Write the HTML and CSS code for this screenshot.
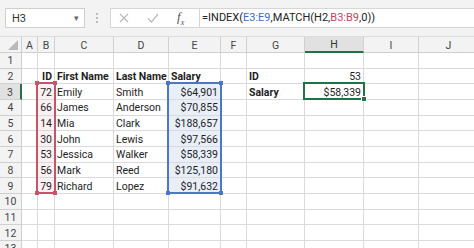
FILE: index.html
```html
<!DOCTYPE html>
<html lang="en">
  <head>
    <meta charset="UTF-8">
    <title>INDEX and MATCH</title>
    <link rel="stylesheet" href="styles.css">
  </head>
  <body>

    <!-- Name box + formula bar -->
    <div class="toolbar">
      <div class="name-box">
        <span>H3</span>
        <span class="drop">&#9662;</span>
      </div>
      <div class="grip"><i></i><i></i><i></i></div>
      <div class="formula-bar">
        <div class="fx-buttons">
          <svg width="10" height="10" viewBox="0 0 10 10"><path d="M1 1 L9 9 M9 1 L1 9" stroke="#b9b9b9" stroke-width="1.2"/></svg>
          <svg width="12" height="10" viewBox="0 0 12 10"><path d="M1 5.5 L4.5 9 L11 1" stroke="#b9b9b9" stroke-width="1.2" fill="none"/></svg>
          <span class="fx">f<sub>x</sub></span>
        </div>
        <div class="formula">=INDEX(<span class="ref-blue">E3:E9</span>,MATCH(H2,<span class="ref-red">B3:B9</span>,0))</div>
      </div>
    </div>

    <div class="sheet">
      <div class="row head">
        <div class="corner"><span></span></div>
        <div>A</div><div>B</div><div>C</div><div>D</div><div>E</div><div>F</div><div>G</div><div class="active">H</div><div>I</div><div>J</div>
      </div>
      <div class="row">
        <div class="rh">1</div>
        <div></div><div></div><div></div><div></div><div></div><div></div><div></div><div></div><div></div><div></div>
      </div>
      <div class="row">
        <div class="rh">2</div>
        <div></div><div class="b r">ID</div><div class="b">First Name</div><div class="b">Last Name</div><div class="b">Salary</div><div></div><div class="b">ID</div><div class="r">53</div><div></div><div></div>
      </div>
      <div class="row">
        <div class="rh active">3</div>
        <div></div><div class="r pink">72</div><div>Emily</div><div>Smith</div><div class="r blue">$64,901</div><div></div><div class="b">Salary</div><div class="r">$58,339</div><div></div><div></div>
      </div>
      <div class="row">
        <div class="rh">4</div>
        <div></div><div class="r pink">66</div><div>James</div><div>Anderson</div><div class="r blue">$70,855</div><div></div><div></div><div></div><div></div><div></div>
      </div>
      <div class="row">
        <div class="rh">5</div>
        <div></div><div class="r pink">14</div><div>Mia</div><div>Clark</div><div class="r blue">$188,657</div><div></div><div></div><div></div><div></div><div></div>
      </div>
      <div class="row">
        <div class="rh">6</div>
        <div></div><div class="r pink">30</div><div>John</div><div>Lewis</div><div class="r blue">$97,566</div><div></div><div></div><div></div><div></div><div></div>
      </div>
      <div class="row">
        <div class="rh">7</div>
        <div></div><div class="r pink">53</div><div>Jessica</div><div>Walker</div><div class="r blue">$58,339</div><div></div><div></div><div></div><div></div><div></div>
      </div>
      <div class="row">
        <div class="rh">8</div>
        <div></div><div class="r pink">56</div><div>Mark</div><div>Reed</div><div class="r blue">$125,180</div><div></div><div></div><div></div><div></div><div></div>
      </div>
      <div class="row">
        <div class="rh">9</div>
        <div></div><div class="r pink">79</div><div>Richard</div><div>Lopez</div><div class="r blue">$91,632</div><div></div><div></div><div></div><div></div><div></div>
      </div>
      <div class="row">
        <div class="rh">10</div>
        <div></div><div></div><div></div><div></div><div></div><div></div><div></div><div></div><div></div><div></div>
      </div>
      <div class="row">
        <div class="rh">11</div>
        <div></div><div></div><div></div><div></div><div></div><div></div><div></div><div></div><div></div><div></div>
      </div>
      <div class="row">
        <div class="rh">12</div>
        <div></div><div></div><div></div><div></div><div></div><div></div><div></div><div></div><div></div><div></div>
      </div>
      <div class="row">
        <div class="rh">13</div>
        <div></div><div></div><div></div><div></div><div></div><div></div><div></div><div></div><div></div><div></div>
      </div>

      <!-- Range highlights drawn over the cells -->
      <div class="range range-red"><i class="tl"></i><i class="tr"></i><i class="bl"></i><i class="br"></i></div>
      <div class="range range-blue"><i class="tl"></i><i class="tr"></i><i class="bl"></i><i class="br"></i></div>
      <div class="cursor"><i></i></div>
    </div>

  </body>
</html>
```

FILE: styles.css
```css
* { box-sizing: border-box; }

body {
	margin: 0;
	height: 248px;
	overflow: hidden;
	background-color: #fff;
	font-family: 'Roboto', 'Liberation Sans', sans-serif;
	font-size: 10.5px;
	color: #1e1e1e;
}

/* Top strip: name box and formula bar */
.toolbar {
	display: flex;
	align-items: center;
	height: 37px;
	padding: 0 0 0 5px;
	background-color: #f3f3f3;
	border-bottom: 1px solid #dcdcdc;
	font-size: 11px;
}

.name-box {
	display: flex;
	align-items: center;
	justify-content: space-between;
	width: 80px;
	height: 20px;
	padding: 0 5px 0 6px;
	background-color: #fff;
	border: 1px solid #cfcfcf;
	color: #333;
}

.name-box .drop {
	font-size: 9px;
	color: #666;
}

.grip {
	display: flex;
	flex-direction: column;
	gap: 2px;
	margin: 0 12px 0 11px;
}

.grip i {
	display: block;
	width: 2px;
	height: 2px;
	background-color: #bdbdbd;
}

.formula-bar {
	display: flex;
	flex: 1;
	height: 20px;
	background-color: #fff;
	border: 1px solid #d6d6d6;
	border-right: none;
}

.fx-buttons {
	display: flex;
	align-items: center;
	gap: 18px;
	width: 89px;
	padding-left: 8px;
	border-right: 1px solid #d6d6d6;
}

.fx {
	font-family: 'Liberation Serif', serif;
	font-style: italic;
	font-size: 13px;
	color: #555;
}

.fx sub { font-size: 8px; }

.formula {
	padding-left: 2px;
	line-height: 18px;
	color: #222;
	white-space: nowrap;
}

.ref-blue { color: #3f6cb8; }
.ref-red { color: #b8495f; }

/* Grid */
.sheet {
	position: relative;
}

.row {
	display: grid;
	grid-template-columns: 22px 16px 17px 59px 55px 52px 26px 58px 59px 55px 60px;
	height: 15.67px;
}

.row > div {
	display: flex;
	align-items: center;
	padding: 1px 2px 0;
	border-right: 1px solid #dadada;
	border-bottom: 1px solid #dadada;
	white-space: nowrap;
}

.row.head { height: 16px; }

.row.head > div {
	justify-content: center;
	background-color: #f3f3f3;
	border-color: #d0d0d0;
	color: #444;
}

.row.head > div.active {
	background-color: #e1e1e1;
	border-bottom: 2px solid #217346;
	color: #333;
}

.corner {
	position: relative;
}

.corner span {
	position: absolute;
	right: 3px;
	bottom: 2px;
	width: 0;
	height: 0;
	border-left: 10px solid transparent;
	border-bottom: 10px solid #b9b9b9;
}

.row > div.rh {
	justify-content: center;
	background-color: #f3f3f3;
	border-color: #d0d0d0;
	color: #444;
}

.row > div.rh.active {
	background-color: #e1e1e1;
	border-right: 2px solid #217346;
}

.row > div.b { font-weight: bold; }
.row > div.r { justify-content: flex-end; }

.row > div.pink { background-color: #fbf1f3; }
.row > div.blue { background-color: #e9eff8; }

/* Formula reference outlines, drawn on top of the cells */
.range {
	position: absolute;
	top: 45px;
	height: 112px;
	border: 2px solid;
}

.range-red {
	left: 36px;
	width: 20px;
	border-color: #c3566c;
}

.range-blue {
	left: 167px;
	width: 55px;
	border-color: #4d76c3;
}

.range i {
	position: absolute;
	width: 4px;
	height: 4px;
}

.range-red i { background-color: #c3566c; }
.range-blue i { background-color: #4d76c3; }

.range .tl { top: -3px; left: -3px; }
.range .tr { top: -3px; right: -3px; }
.range .bl { bottom: -3px; left: -3px; }
.range .br { bottom: -3px; right: -3px; }

/* Active cell H3 */
.cursor {
	position: absolute;
	top: 45px;
	left: 303px;
	width: 62px;
	height: 18px;
	border: 2px solid #217346;
}

.cursor i {
	position: absolute;
	right: -4px;
	bottom: -4px;
	width: 6px;
	height: 6px;
	background-color: #217346;
	border: 1px solid #fff;
}
```
